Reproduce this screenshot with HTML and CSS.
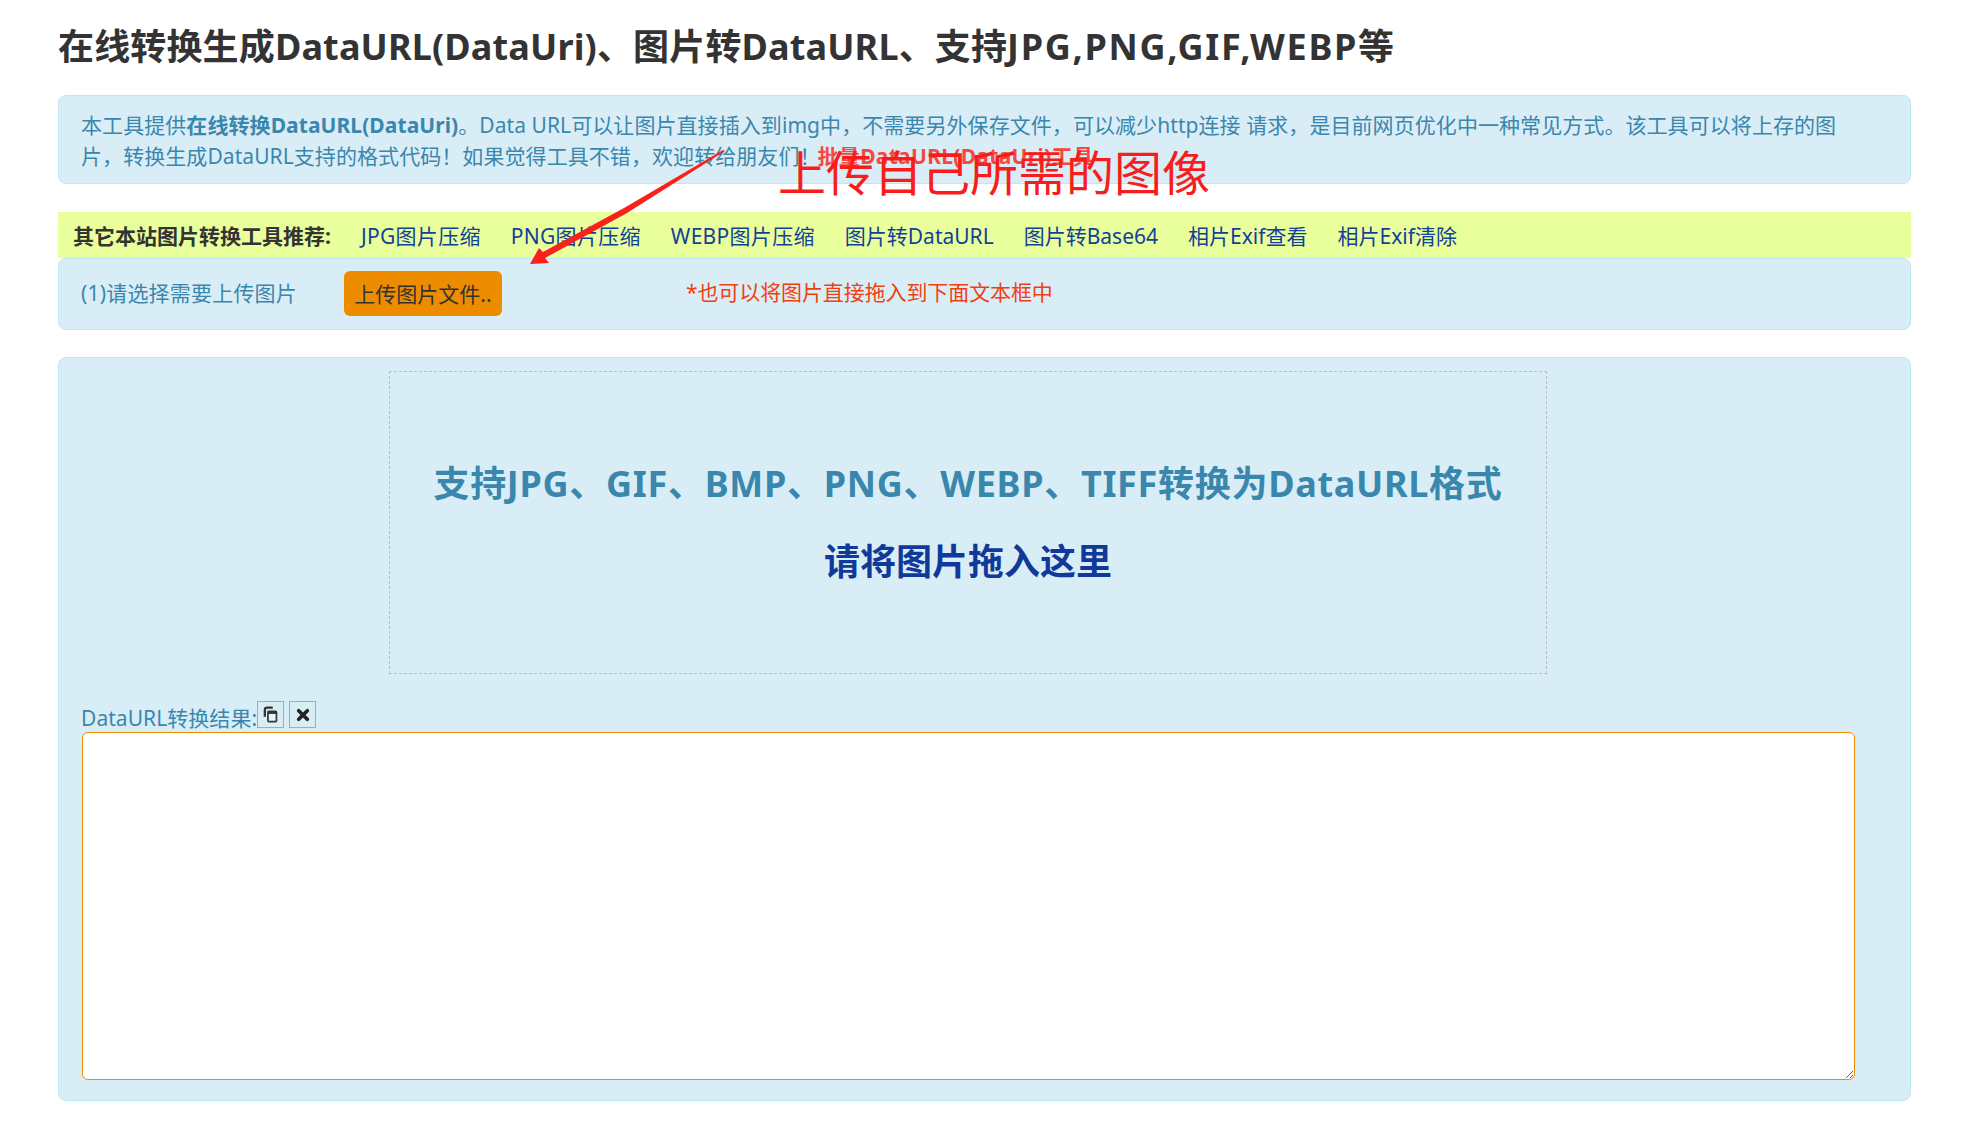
FILE: index.html
```html
<!DOCTYPE html>
<html lang="zh-CN">
<head>
    <meta charset="UTF-8">
    <title>在线转换生成DataURL(DataUri)</title>
    <link rel="stylesheet" href="styles.css">
</head>
<body>
    <div class="container">
        <h1>在线转换生成DataURL(DataUri)、图片转DataURL、支持<span class="wide">JPG,PNG,GIF,WEBP</span>等</h1>

        <div class="alert intro">
            本工具提供<b>在线转换DataURL(DataUri)</b>。Data URL可以让图片直接插入到img中，不需要另外保存文件，可以减少http连接 请求，是目前网页优化中一种常见方式。该工具可以将上存的图片，转换生成DataURL支持的格式代码！如果觉得工具不错，欢迎转给朋友们！<a class="batch-link" href="#">批量DataURL(DataUri)工具</a>
        </div>

        <div class="tool-nav">
            <strong>其它本站图片转换工具推荐:</strong>
            <a href="#">JPG图片压缩</a>
            <a href="#">PNG图片压缩</a>
            <a href="#">WEBP图片压缩</a>
            <a href="#">图片转DataURL</a>
            <a href="#">图片转Base64</a>
            <a href="#">相片Exif查看</a>
            <a href="#">相片Exif清除</a>
        </div>

        <div class="alert upload-row">
            <span class="upload-label">(1)请选择需要上传图片</span>
            <button class="upload-btn">上传图片文件..</button>
            <span class="upload-tip">*也可以将图片直接拖入到下面文本框中</span>
        </div>

        <div class="alert result-panel">
            <div class="drop-zone">
                <p class="drop-title">支持JPG、GIF、BMP、PNG、WEBP、TIFF转换为DataURL格式</p>
                <p class="drop-hint">请将图片拖入这里</p>
            </div>
            <div class="result-label">
                <span>DataURL转换结果:</span>
                <button class="icon-btn" title="复制">
                    <svg width="17" height="17" viewBox="0 0 15 15">
                        <path d="M2.500 9.500V3.500Q2.500 1.500 4.500 1.500H9.500" fill="none" stroke="#333" stroke-width="2"/>
                        <path d="M4.500 5.500Q4.500 4 6 4h6q1.500 0 1.500 1.500V13q0 1.500-1.500 1.500H6Q4.500 14.500 4.500 13z" fill="#333"/>
                        <rect x="6" y="7" width="6" height="6" fill="#e8f2f7"/>
                    </svg>
                </button>
                <button class="icon-btn" title="清除">
                    <svg width="14" height="14" viewBox="0 0 13 13">
                        <path d="M2.500 2.500l8 8M10.500 2.500l-8 8" fill="none" stroke="#222" stroke-width="3.400" stroke-linecap="round"/>
                    </svg>
                </button>
            </div>
            <textarea class="result-text"></textarea>
        </div>

        <!-- annotation drawn over the page -->
        <svg class="note-arrow" width="210" height="125" viewBox="0 0 210 125">
            <path d="M200 6L102 68L20 113L24 118L5 119L14 103L18 107L99 63L198 5z" fill="#f9211c"/>
        </svg>
        <div class="note-text">上传自己所需的图像</div>
    </div>
</body>
</html>
```

FILE: styles.css
```css
body {
    font-family: "Noto Sans", "Noto Sans CJK SC", sans-serif;
    margin: 0;
    background-color: #fff;
    color: #333;
    font-size: 21px;
}
.container {
    position: relative;
    padding: 0 63px 49px 58px;
}
h1 {
    margin: 0;
    padding: 22px 0 23px;
    font-size: 36px;
    line-height: 50px;
    font-weight: bold;
    letter-spacing: 0.15px;
    color: #333;
}
h1 .wide {
    letter-spacing: 1.7px;
}
.alert {
    background: #d9edf7;
    border: 1px solid #bce8f1;
    border-radius: 8px;
    color: #3a87ad;
}
.intro {
    padding: 14px 50px 11px 22px;
    line-height: 31px;
    letter-spacing: 0.07px;
    margin-bottom: 28px;
}
.batch-link {
    margin-left: -3px;
    color: #f5483f;
    font-weight: bold;
    letter-spacing: 0.3px;
    text-decoration: none;
}
.tool-nav {
    display: flex;
    align-items: center;
    gap: 30px;
    height: 46px;
    padding-left: 15px;
    background: #e9ff9b;
}
.tool-nav strong {
    font-size: 21px;
    color: #333;
}
.tool-nav a {
    color: #143f96;
    text-decoration: none;
}
.tool-nav a:nth-of-type(-n+3) {
    letter-spacing: 0.3px;
}
.upload-row {
    display: flex;
    align-items: center;
    height: 70px;
    padding-left: 22px;
    margin-bottom: 27px;
}
.upload-label {
    width: 263px;
    letter-spacing: 0.2px;
    margin-top: -5px;
}
.upload-btn {
    width: 158px;
    height: 45px;
    padding: 0;
    margin-top: -2px;
    border: none;
    border-radius: 6px;
    background: #ee8c00;
    color: #333;
    font-family: inherit;
    font-size: 21px;
}
.upload-tip {
    margin-left: 184px;
    margin-top: -6px;
    letter-spacing: -0.1px;
    color: #f1400f;
}
.result-panel {
    padding: 13px 55px 20px 22px;
}
.drop-zone {
    box-sizing: border-box;
    width: 1158px;
    height: 303px;
    margin: 0 auto;
    border: 1px dashed #b4bfc6;
    text-align: center;
    padding-top: 73px;
}
.drop-zone p {
    margin: 0;
    font-size: 36px;
    line-height: 78px;
    font-weight: bold;
}
.drop-title {
    letter-spacing: 0.7px;
}
.drop-hint {
    color: #10399a;
}
.result-label {
    display: flex;
    align-items: center;
    height: 58px;
    padding-top: 27px;
    box-sizing: border-box;
    letter-spacing: 0.05px;
}
.icon-btn {
    display: flex;
    align-items: center;
    justify-content: center;
    box-sizing: border-box;
    width: 27px;
    height: 27px;
    padding: 0;
    margin-right: 5px;
    margin-top: -4px;
    background: transparent;
    border: 1px solid #aaa;
}
.result-text {
    display: block;
    box-sizing: border-box;
    width: 1773px;
    height: 348px;
    margin-left: 1px;
    border: 1px solid #ee8c00;
    border-radius: 6px;
    background: #fff;
    outline: none;
}
.note-arrow {
    position: absolute;
    left: 525px;
    top: 145px;
}
.note-text {
    position: absolute;
    left: 778px;
    top: 138px;
    font-size: 48px;
    line-height: 70px;
    color: #f91c1c;
}
```
